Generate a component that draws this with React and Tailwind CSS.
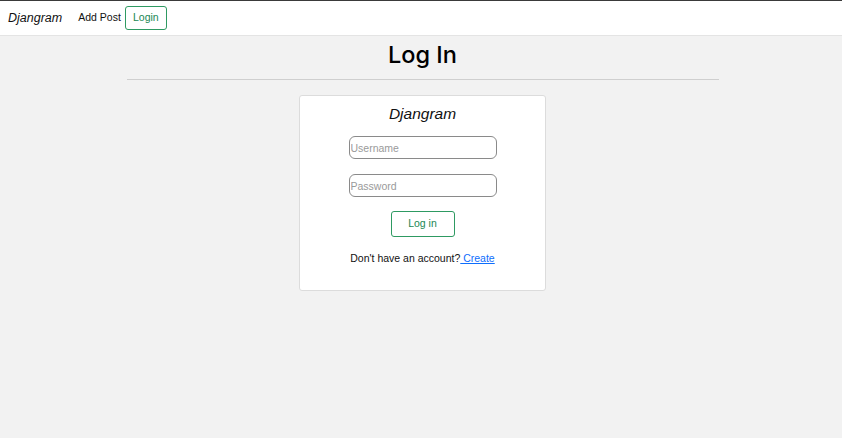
import React from "react";

export default function App() {
  return (
    <div className="min-h-[438px] w-full bg-[#f2f2f2] font-['Liberation_Sans',Arial,sans-serif] text-black border-t border-[#3a3a3a]">
      <nav className="h-[35px] bg-white border-b border-[#e4e4e4] flex items-center pl-[8px]">
        <span className="italic text-[12.5px] text-[#111]">Djangram</span>
        <span className="ml-[16px] text-[10.5px] text-[#111]">Add Post</span>
        <button className="ml-[4px] h-[24px] w-[42px] rounded-[3px] border border-[#2e9a62] text-[#198754] text-[10.5px] bg-white">Login</button>
      </nav>
      <div className="flex flex-col items-center pl-[3px]">
        <h1 className="mt-[2px] text-[23.5px] leading-[34px] font-medium font-['Inter',sans-serif]">Log In</h1>
        <div className="mt-[7px] w-[592px] h-px bg-[#cfcfcf]" />
        <div className="mt-[15px] w-[247px] h-[196px] bg-white border border-[#dcdcdc] rounded-[3px] flex flex-col items-center">
          <div className="mt-[7px] italic text-[15.5px] leading-[22px] text-[#111]">Djangram</div>
          <input placeholder="Username" className="mt-[11px] w-[148px] h-[23px] rounded-[6px] border border-[#8a8a8a] text-[10.5px] pl-[1px] placeholder:text-[#9a9a9a] outline-none" />
          <input placeholder="Password" className="mt-[15px] w-[148px] h-[23px] rounded-[6px] border border-[#8a8a8a] text-[10.5px] pl-[1px] placeholder:text-[#9a9a9a] outline-none" />
          <button className="mt-[14px] w-[64px] h-[26px] rounded-[3px] border border-[#2e9a62] text-[#198754] text-[10.5px] bg-white">Log in</button>
          <div className="mt-[14px] text-[10.5px] text-[#111]">
            Don't have an account?<a href="#" className="text-[#0d6efd] underline"> Create</a>
          </div>
        </div>
      </div>
    </div>
  );
}
